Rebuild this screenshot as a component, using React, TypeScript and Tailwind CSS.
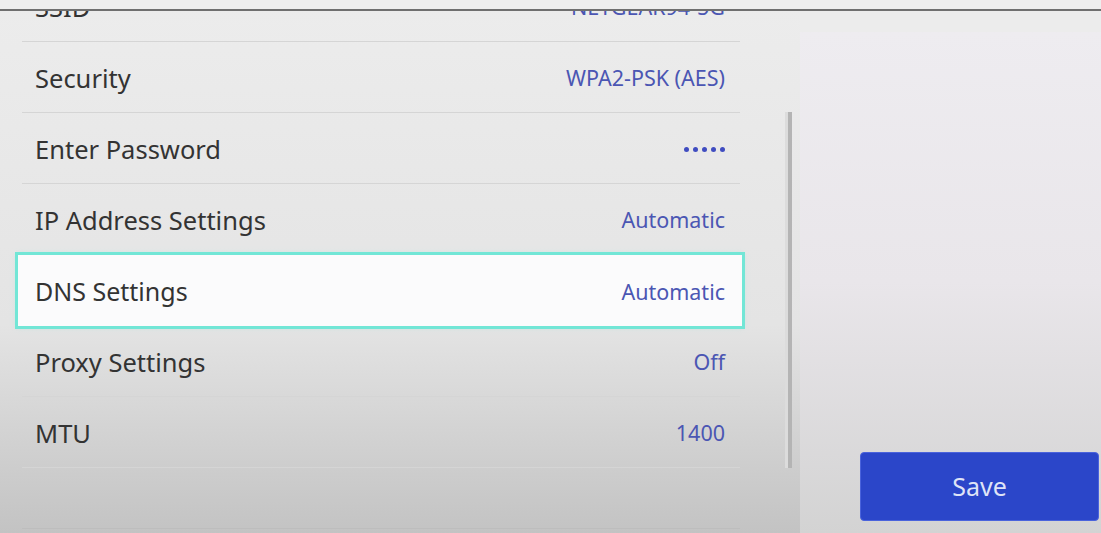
const rows = [
  { label: "SSID", value: "NETGEAR94-5G" },
  { label: "Security", value: "WPA2-PSK (AES)" },
  { label: "Enter Password", value: "", dots: true },
  { label: "IP Address Settings", value: "Automatic" },
  { label: "DNS Settings", value: "Automatic", focused: true },
  { label: "Proxy Settings", value: "Off" },
  { label: "MTU", value: "1400" },
];

const Dots = () => (
  <span className="flex gap-[4px]" aria-label="password">
    {[0, 1, 2, 3, 4].map((i) => (
      <span key={i} className="h-[5px] w-[5px] rounded-full bg-[#3f4cc0]" />
    ))}
  </span>
);

const SettingRow = ({ label, value, focused, dots }: any) => {
  if (focused) {
    return (
      <div className="relative z-10 flex h-[71px] items-center justify-between bg-[#fbfbfc] px-[17px] pt-[3px] ring-[3px] ring-[#72e6d6] shadow-[0_0_6px_rgba(114,230,214,0.6)]">
        <span className="text-[25px] text-[#333]">{label}</span>
        <span className="text-[21.5px] text-[#4b56b3]">{value}</span>
      </div>
    );
  }
  return (
    <div className="ml-[4px] mr-[2px] flex h-[71px] items-center justify-between border-b border-[#d5d5d5] pl-[13px] pr-[15px] pt-[3px]">
      <span className="text-[25.5px] text-[#333]">{label}</span>
      {dots ? <Dots /> : <span className="text-[21.5px] text-[#4b56b3]">{value}</span>}
    </div>
  );
};

export default function App() {
  return (
    <div className="flex h-[533px] w-[1101px] flex-col overflow-hidden bg-[#ececec] font-['Noto_Sans',sans-serif]">
      <div className="relative z-20 h-[9px] bg-[#eeeeee]" />
      <div className="relative z-20 h-[2px] bg-[#6f6f6f]" />
      <div className="flex flex-1 overflow-hidden">
        <div className="flex w-[800px] items-start bg-gradient-to-b from-[#ececec] via-[#e4e4e4] via-60% to-[#c3c3c3]">
          <div className="-mt-[40px] ml-[18px] w-[724px]">
            {rows.map((r) => (
              <SettingRow key={r.label} {...r} />
            ))}
            <div className="ml-[4px] mr-[2px] h-[61px] border-b border-[#bdbdbd]" />
          </div>
          <div className="ml-[43px] mt-[101px] h-[356px] w-[7px] border-l-[3px] border-[#dcdcdc] bg-[#b4b4b4]" />
        </div>
        <div className="mt-[21px] flex flex-1 flex-col justify-end bg-gradient-to-b from-[#eeecf0] via-[#e9e6ea] to-[#d3d3d3] pb-[12px] pl-[60px] pr-[2px]">
          <button className="flex h-[69px] w-[239px] items-center justify-center rounded-[4px] border border-[#4a63dc] bg-[#2b46c9] text-[25px] text-[#dfe3f7]">
            Save
          </button>
        </div>
      </div>
    </div>
  );
}
